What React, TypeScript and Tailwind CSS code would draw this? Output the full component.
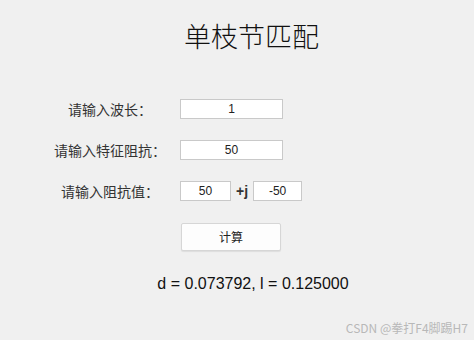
import React from 'react';

const cjk = { fontFamily: '"Noto Sans CJK SC", "Noto Sans", sans-serif' };
const arial = { fontFamily: '"Liberation Sans", Arial, sans-serif' };

const Field: React.FC<{ value: string; width: string }> = ({ value, width }) => (
  <input
    readOnly
    defaultValue={value}
    style={arial}
    className={`${width} h-[20px] bg-white border border-[#c9c9c9] text-center text-[12px] text-[#222] outline-none px-1`}
  />
);

const Row: React.FC<{ label: string; children: React.ReactNode }> = ({ label, children }) => (
  <div className="flex items-center h-[20px]">
    <div style={cjk} className="w-[140px] text-center text-[14px] text-[#333] leading-[20px]">
      {label}
    </div>
    <div className="flex items-center">{children}</div>
  </div>
);

export default function App() {
  return (
    <div className="relative w-[474px] h-[340px] bg-[#f0f0f0] overflow-hidden">
      <div className="flex justify-center pl-[29px] pt-[19px]">
        <h1 style={cjk} className="text-[27px] leading-[34px] font-light text-[#111]">
          单枝节匹配
        </h1>
      </div>

      <div className="flex flex-col gap-[21px] pl-[40px] mt-[46px]">
        <Row label="请输入波长：">
          <Field value="1" width="w-[103px]" />
        </Row>
        <Row label="请输入特征阻抗：">
          <Field value="50" width="w-[103px]" />
        </Row>
        <Row label="请输入阻抗值：">
          <Field value="50" width="w-[51px]" />
          <span style={arial} className="mx-[5px] text-[14px] font-bold text-[#333] leading-[20px]">
            +j
          </span>
          <Field value="-50" width="w-[49px]" />
        </Row>
      </div>

      <div className="pl-[181px] mt-[22px]">
        <button
          style={cjk}
          className="w-[100px] h-[28px] bg-[#fdfdfd] border border-[#d6d6d6] rounded-[2px] shadow-[0_1px_1px_rgba(0,0,0,0.08)] text-[12px] text-[#222]"
        >
          计算
        </button>
      </div>

      <div className="flex justify-center pl-[32px] mt-[23px]">
        <p style={arial} className="text-[16px] leading-[20px] text-[#111]">
          d = 0.073792, l = 0.125000
        </p>
      </div>

      <div
        style={cjk}
        className="absolute right-[6px] bottom-[4px] text-[12px] leading-[16px] text-[#b8b8b8]"
      >
        CSDN @拳打F4脚踢H7
      </div>
    </div>
  );
}
